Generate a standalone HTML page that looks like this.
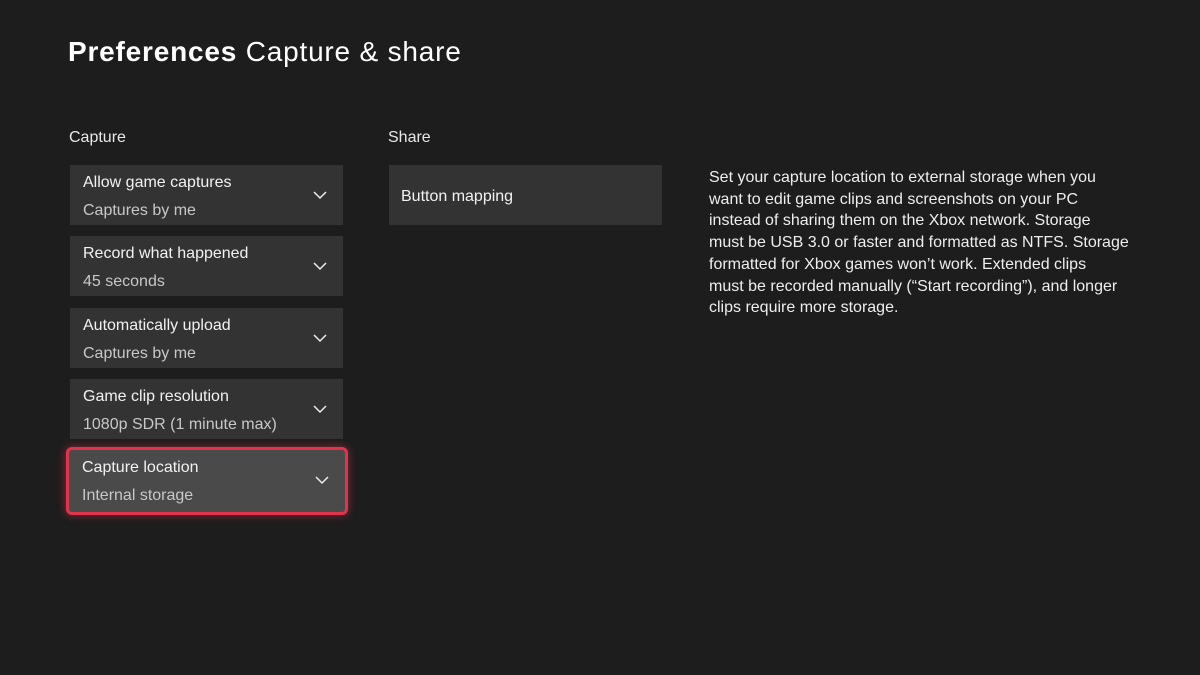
<!DOCTYPE html><html><head><style>
body{margin:0;width:1200px;height:675px;background:#1d1d1d;font-family:"Liberation Sans",sans-serif;color:#fff;position:relative;overflow:hidden}
.a{position:absolute}
h1{position:absolute;left:68px;top:36px;margin:0;font-size:28px;font-weight:normal;letter-spacing:0.8px}
h1 b{font-weight:bold}
.lbl{font-size:16px;color:#e8e8e8}
.t{position:absolute;left:70px;width:273px;height:60px;background:#333}
.t .l1{position:absolute;left:13px;top:9px;font-size:16px;color:#f2f2f2}
.t .l2{position:absolute;left:13px;top:37px;font-size:16px;color:#c8c8c8}
.t svg{position:absolute;right:16px;top:26px}
.f{background:#4a4a4a;box-shadow:0 0 0 3px #e0344c,0 0 8px 4px rgba(224,52,76,.45);border-radius:3px}
.d{left:709px;top:167px;white-space:nowrap;font-size:16px;line-height:21.7px;color:#eee}
</style></head><body>
<h1><b>Preferences</b> Capture &amp; share</h1>
<div class="a lbl" style="left:69px;top:129px">Capture</div>
<div class="a lbl" style="left:388px;top:129px">Share</div>
<div class="t" style="top:165px"><div class="l1">Allow game captures</div><div class="l2">Captures by me</div><svg width="14" height="9"><path d="M1 1l6 6 6-6" stroke="#eee" stroke-width="1.5" fill="none"/></svg></div>
<div class="t" style="top:236px"><div class="l1">Record what happened</div><div class="l2">45 seconds</div><svg width="14" height="9"><path d="M1 1l6 6 6-6" stroke="#eee" stroke-width="1.5" fill="none"/></svg></div>
<div class="t" style="top:308px"><div class="l1">Automatically upload</div><div class="l2">Captures by me</div><svg width="14" height="9"><path d="M1 1l6 6 6-6" stroke="#eee" stroke-width="1.5" fill="none"/></svg></div>
<div class="t" style="top:379px"><div class="l1">Game clip resolution</div><div class="l2">1080p SDR (1 minute max)</div><svg width="14" height="9"><path d="M1 1l6 6 6-6" stroke="#eee" stroke-width="1.5" fill="none"/></svg></div>
<div class="t f" style="top:450px;left:69px;width:276px;height:62px"><div class="l1">Capture location</div><div class="l2">Internal storage</div><svg width="14" height="9"><path d="M1 1l6 6 6-6" stroke="#eee" stroke-width="1.5" fill="none"/></svg></div>
<div class="t" style="left:389px;top:165px"><div class="l1" style="left:12px;top:23px">Button mapping</div></div>
<div class="a d">Set your capture location to external storage when you<br>want to edit game clips and screenshots on your PC<br>instead of sharing them on the Xbox network. Storage<br>must be USB 3.0 or faster and formatted as NTFS. Storage<br>formatted for Xbox games won’t work. Extended clips<br>must be recorded manually (“Start recording”), and longer<br>clips require more storage.</div>
</body></html>
